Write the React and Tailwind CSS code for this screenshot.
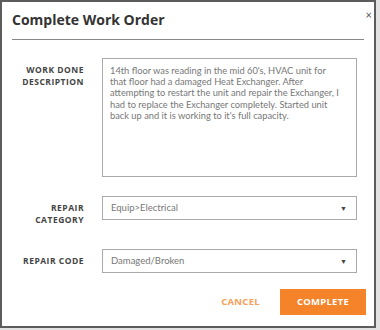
const heading = { fontFamily: '"Open Sans", "DejaVu Sans", sans-serif' };

function Label({ children, className = "" }) {
  return (
    <div
      className={`w-[72px] shrink-0 text-right text-[8.5px] font-bold uppercase leading-[11.5px] tracking-[0.5px] text-[#444] ${className}`}
      style={heading}
    >
      {children}
    </div>
  );
}

function Select({ value }) {
  return (
    <div className="flex h-[24px] w-[255px] items-center justify-between border border-[#aaa] bg-white pl-[8px] pr-[9px] text-[9.5px] text-[#777]">
      <span>{value}</span>
      <span className="text-[7px] leading-none text-[#444]">▼</span>
    </div>
  );
}

export default function App() {
  const lines = [
    "14th floor was reading in the mid 60's, HVAC unit for",
    "that floor had a damaged Heat Exchanger. After",
    "attempting to restart the unit and repair the Exchanger, I",
    "had to replace the Exchanger completely. Started unit",
    "back up and it is working to it's full capacity.",
  ];

  return (
    <div
      className="h-[330px] w-[380px] bg-[#e2e2e2]"
      style={{ fontFamily: 'Lato, "Open Sans", sans-serif' }}
    >
      <div className="relative h-[328px] w-[376px] border-2 border-[#5c5c5c] bg-white">
        {/* Header */}
        <div className="mx-[10px] border-b border-[#888] pb-[9px] pt-[8px]">
          <h1 className="text-[14px] font-bold leading-[20px] text-[#333]" style={heading}>
            Complete Work Order
          </h1>
        </div>
        <button className="absolute right-[2px] top-[7px] text-[11px] leading-none text-[#555]">
          ×
        </button>

        {/* Form */}
        <div className="ml-[10px] mt-[18px]">
          <div className="flex gap-[18px]">
            <Label className="pt-[6px]">
              Work Done
              <br />
              Description
            </Label>
            <div className="h-[119px] w-[255px] border border-[#aaa] px-[7px] pt-[6px] text-[9.3px] leading-[11.2px] text-[#777]">
              {lines.map((l, i) => (
                <div key={i} className="whitespace-nowrap">
                  {l}
                </div>
              ))}
            </div>
          </div>

          <div className="mt-[19px] flex gap-[18px]">
            <Label className="pt-[6px]">
              Repair
              <br />
              Category
            </Label>
            <Select value="Equip>Electrical" />
          </div>

          <div className="mt-[24px] flex items-center gap-[18px]">
            <Label>Repair Code</Label>
            <Select value="Damaged/Broken" />
          </div>
        </div>

        {/* Actions */}
        <div className="mr-[8px] mt-[16px] flex items-center justify-end gap-[20px]">
          <button
            className="text-[9.5px] font-bold uppercase tracking-[0.3px] text-[#f5a059]"
            style={heading}
          >
            Cancel
          </button>
          <button
            className="h-[26px] w-[86px] bg-[#f5832a] text-[9.5px] font-bold uppercase tracking-wide text-white"
            style={heading}
          >
            Complete
          </button>
        </div>
      </div>
    </div>
  );
}
